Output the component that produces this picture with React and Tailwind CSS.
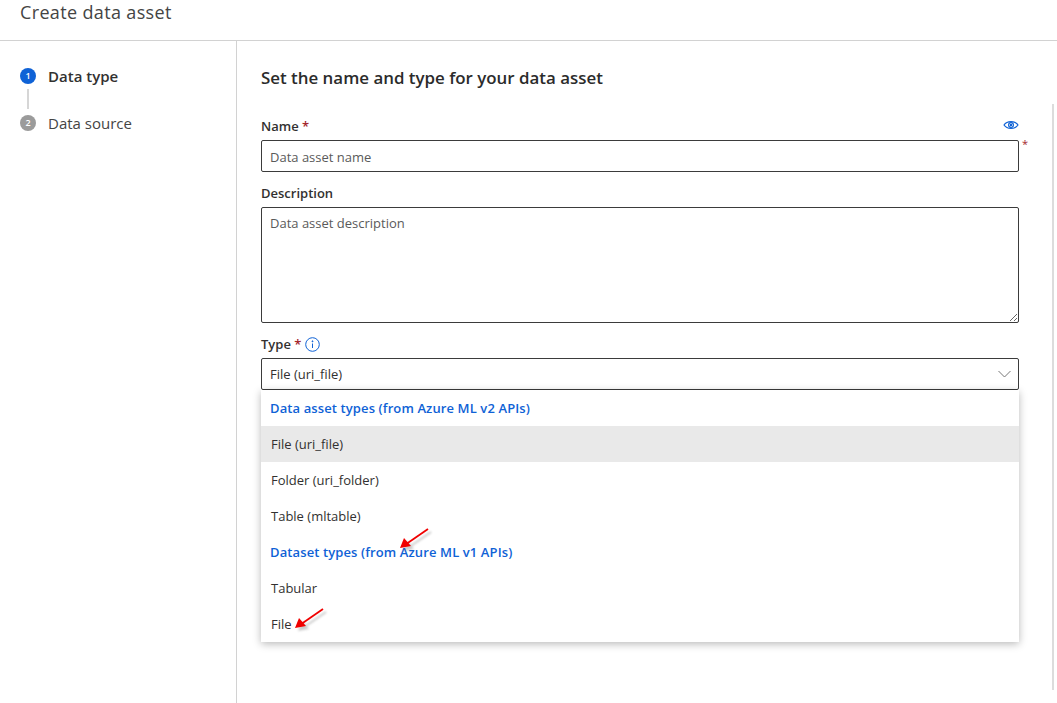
import React from "react";

const Arrow = ({ className }) => (
  <svg className={className} width="40" height="32" viewBox="0 0 40 32" fill="none">
    <g opacity="0.3" transform="translate(3 3)" style={{ filter: "blur(1.2px)" }}>
      <path d="M29 1 L8 15.5" stroke="#555" strokeWidth="2" />
      <path d="M1 20 L5 10 L12 18 Z" fill="#555" />
    </g>
    <path d="M29 1 L8 15.5" stroke="#f00000" strokeWidth="1.8" />
    <path d="M1 20 L5 10 L12 18 Z" fill="#f00000" />
  </svg>
);

const Item = ({ children, active }) => (
  <div className={`h-9 flex items-center pl-[10px] pt-[2px] text-[13px] text-[#323130] ${active ? "bg-[#e9e9e9]" : ""}`}>{children}</div>
);

const Group = ({ children }) => (
  <div className="h-9 flex items-center pl-[9px] pt-[2px] text-[13px] tracking-[0.11px] font-semibold text-[#0f62d6]">{children}</div>
);

const Req = () => <span className="text-[#a4262c]"> *</span>;

export default function App() {
  return (
    <div className="w-[1057px] h-[703px] overflow-hidden bg-white flex flex-col text-[#323130] font-['Open_Sans','Noto_Sans',sans-serif]">
      <header className="h-[41px] shrink-0 border-b border-[#d2d2d2] pl-5">
        <h1 className="text-[18px] leading-6 text-[#444] tracking-[0.35px]">Create data asset</h1>
      </header>
      <div className="flex-1 flex min-h-0">
        <aside className="w-[237px] shrink-0 border-r border-[#d2d2d2] pl-5 pt-[27px]">
          <div className="flex items-center gap-[12px] h-4">
            <span className="w-4 h-4 rounded-full bg-[#0f62d6] text-white text-[9px] font-semibold flex items-center justify-center">1</span>
            <span className="text-[15px] font-semibold text-[#323130]">Data type</span>
          </div>
          <div className="w-[2px] h-5 bg-[#d6d6d6] ml-[7px] mt-[5px] mb-[6px]" />
          <div className="flex items-center gap-[12px] h-4">
            <span className="w-4 h-4 rounded-full bg-[#9b9b9b] text-white text-[9px] font-semibold flex items-center justify-center">2</span>
            <span className="text-[15px] text-[#444]">Data source</span>
          </div>
        </aside>
        <main className="flex-1 flex min-w-0 pl-6 relative">
          <div className="w-[758px] shrink-0">
            <h2 className="mt-[25px] text-[16.9px] leading-6 font-semibold text-[#2b2b2b]">Set the name and type for your data asset</h2>
            <div className="mt-[27px] h-[19px] flex items-center justify-between text-[13px] font-semibold">
              <span>Name<Req /></span>
              <svg className="-mt-[4px]" width="16" height="12" viewBox="0 0 16 12" fill="none" stroke="#0f62d6" strokeWidth="1.2">
                <path d="M1 6 C4 1.5 12 1.5 15 6 C12 10.5 4 10.5 1 6 Z" />
                <circle cx="8" cy="6" r="2.4" />
                <circle cx="8" cy="6" r="0.6" fill="#0f62d6" />
              </svg>
            </div>
            <div className="relative mt-[4px]">
              <input readOnly placeholder="Data asset name" className="block w-full h-[32px] border border-[#3b3b3b] rounded-[2px] px-2 pt-[2px] text-[13px] bg-white outline-none placeholder:text-[#5a5a5a]" />
              <span className="absolute left-[761px] -top-[4px] text-[11px] text-[#a4262c]">*</span>
            </div>
            <div className="mt-[12px] h-[19px] flex items-center text-[13px] font-semibold">Description</div>
            <textarea readOnly placeholder="Data asset description" className="block mt-[4px] w-full h-[116px] border border-[#3b3b3b] rounded-[2px] px-2 py-[6px] text-[13px] leading-[19px] bg-white outline-none resize-y placeholder:text-[#5a5a5a]" />
            <div className="mt-[12px] h-[19px] flex items-center gap-[4px] text-[13px] font-semibold">
              <span>Type<Req /></span>
              <svg width="15" height="15" viewBox="0 0 15 15" fill="none" stroke="#0f62d6" strokeWidth="1">
                <circle cx="7.5" cy="7.5" r="6.8" />
                <path d="M7.5 6.5 V11" />
                <circle cx="7.5" cy="4.3" r="0.5" fill="#0f62d6" />
              </svg>
            </div>
            <div className="relative mt-[4px]">
              <div className="h-[32px] border border-[#3b3b3b] rounded-[2px] pl-2 pr-[7px] flex items-center justify-between text-[13px]">
                <span className="pt-[1px]">File (uri_file)</span>
                <svg width="13" height="8" viewBox="0 0 13 8" fill="none" stroke="#777" strokeWidth="1">
                  <path d="M0.5 1 L6.5 7 L12.5 1" />
                </svg>
              </div>
              <div className="absolute top-[32px] left-0 right-0 bg-white shadow-[0_2px_8px_rgba(0,0,0,0.28)]">
                <Group>Data asset types (from Azure ML v2 APIs)</Group>
                <Item active>File (uri_file)</Item>
                <Item>Folder (uri_folder)</Item>
                <Item>Table (mltable)</Item>
                <Group>Dataset types (from Azure ML v1 APIs)</Group>
                <Item>Tabular</Item>
                <Item>File</Item>
              </div>
            </div>
          </div>
          <Arrow className="absolute left-[162px] top-[487px]" />
          <Arrow className="absolute left-[57px] top-[567px]" />
          <div className="absolute left-[815px] top-[63px] w-[2px] h-[586px] bg-[#dcdcdc]" />
        </main>
      </div>
    </div>
  );
}
